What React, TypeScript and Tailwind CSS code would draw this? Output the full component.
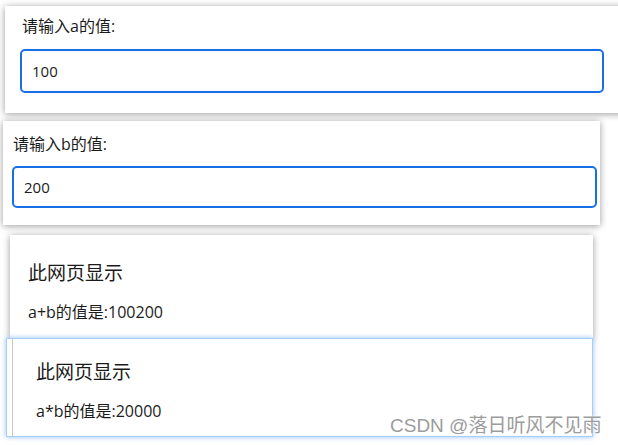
const sans = "font-['Open_Sans','Noto_Sans_CJK_SC',sans-serif]";

function PromptLabel({ label }: { label: string }) {
  return <div className="text-[16px] leading-[24px] text-[#1b1b1b]">{label}</div>;
}

function PromptInput({ value, className }: { value: string; className: string }) {
  return (
    <div
      className={`flex items-center rounded-[5px] border-2 border-[#1b6fe6] pl-[10px] text-[15px] text-[#1b1b1b] ${className}`}
    >
      {value}
    </div>
  );
}

export default function App() {
  return (
    <div className={`relative flex h-[445px] w-[618px] flex-col overflow-hidden bg-white ${sans}`}>
      {/* prompt a */}
      <div className="ml-[5px] mt-[6px] h-[107px] w-[630px] shrink-0 bg-white pl-[15px] pt-[8px] shadow-[0_1px_7px_rgba(0,0,0,0.4)]">
        <div className="ml-[2px]">
          <PromptLabel label="请输入a的值:" />
        </div>
        <PromptInput value="100" className="mt-[11px] h-[44px] w-[584px]" />
      </div>

      {/* prompt b */}
      <div className="ml-[3px] mt-[8px] h-[104px] w-[597px] shrink-0 bg-white pl-[9px] pt-[11px] shadow-[0_1px_7px_rgba(0,0,0,0.4)]">
        <div className="ml-[1px]">
          <PromptLabel label="请输入b的值:" />
        </div>
        <PromptInput value="200" className="mt-[10px] h-[42px] w-[585px]" />
      </div>

      {/* alert a+b */}
      <div className="ml-[10px] mt-[10px] h-[103px] w-[583px] shrink-0 bg-white pl-[18px] pt-[25px] text-[#1b1b1b] shadow-[0_1px_7px_rgba(0,0,0,0.4)]">
        <div className="text-[19px] leading-[26px]">此网页显示</div>
        <div className="mt-[14px] text-[16px] leading-[24px]">a+b的值是:100200</div>
      </div>

      {/* alert a*b */}
      <div className="relative z-10 ml-[6px] flex h-[99px] w-[587px] shrink-0 border border-[#a9cdf6] bg-white shadow-[0_0_5px_rgba(80,150,240,0.6)]">
        <div className="w-[5px] shrink-0" />
        <div className="flex-1 border-l border-[#c9c9c9] pl-[23px] pt-[20px] text-[#1b1b1b]">
          <div className="text-[19px] leading-[26px]">此网页显示</div>
          <div className="mt-[14px] text-[16px] leading-[24px]">a*b的值是:20000</div>
        </div>
      </div>

      <div className="absolute left-[390px] top-[414px] z-20 font-['Liberation_Sans','Noto_Sans_CJK_SC',sans-serif] text-[19px] leading-[24px] text-[#9c9c9c] [text-shadow:0_0_1px_#fff,0_0_2px_#fff]">
        CSDN @落日听风不见雨
      </div>
    </div>
  );
}
